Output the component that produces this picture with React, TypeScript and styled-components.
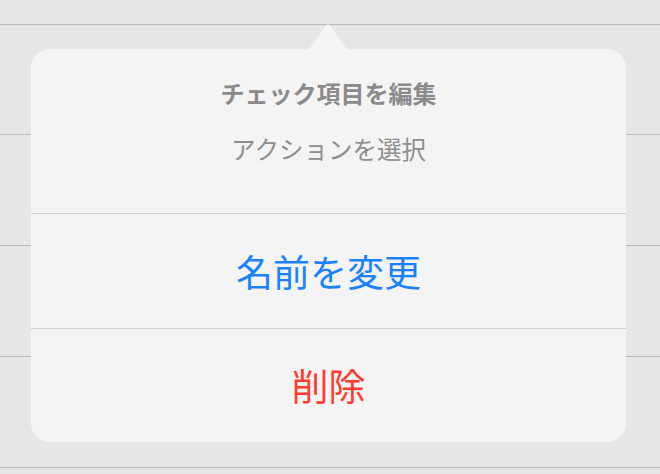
import styled, { createGlobalStyle } from 'styled-components';

const GlobalStyle = createGlobalStyle`
  html, body {
    margin: 0;
    padding: 0;
    background: #e6e6e6;
  }
  body {
    font-family: "Noto Sans CJK JP", "Noto Sans", sans-serif;
    overflow: hidden;
  }
`;

const rows = [24, 109, 110, 110, 110];

export default function App() {
  return (
    <Screen>
      <GlobalStyle />
      <List>
        {rows.map((h, i) => (
          <Row key={i} style={{ height: h }} />
        ))}
      </List>

      <Popover>
        <Arrow width="48" height="26" viewBox="0 0 48 26">
          <path d="M0 26 C5 26 7 24 9 21 L22 2.5 Q24 -0.5 26 2.5 L39 21 C41 24 43 26 48 26 Z" fill="#f4f4f4" />
        </Arrow>
        <Card>
          <Header>
            <Title>チェック項目を編集</Title>
            <Message>アクションを選択</Message>
          </Header>
          <Action>名前を変更</Action>
          <Action destructive>削除</Action>
        </Card>
      </Popover>
    </Screen>
  );
}

const Screen = styled.div`
  position: relative;
  width: 660px;
  height: 474px;
  overflow: hidden;
  background: #e6e6e6;
`;

const List = styled.div`
  display: flex;
  flex-direction: column;
`;

const Row = styled.div`
  flex: none;
  border-bottom: 1px solid #b9b9b9;
`;

const Popover = styled.div`
  position: absolute;
  top: 23px;
  left: 31px;
  width: 595px;
  padding-top: 26px;
`;

const Arrow = styled.svg`
  position: absolute;
  top: 0;
  left: 273px;
  display: block;
`;

const Card = styled.div`
  height: 393px;
  background: #f4f4f4;
  border-radius: 19px;
  display: flex;
  flex-direction: column;
  overflow: hidden;
`;

const Header = styled.div`
  height: 165px;
  box-sizing: border-box;
  display: flex;
  flex-direction: column;
  align-items: center;
  padding-top: 28px;
  gap: 24px;
  border-bottom: 1px solid #cfcfcf;
`;

const Title = styled.div`
  font-size: 24px;
  line-height: 32px;
  font-weight: 700;
  color: #8a8a8a;
`;

const Message = styled.div`
  font-size: 24.5px;
  line-height: 32px;
  color: #8e8e8e;
`;

const Action = styled.div<{ destructive?: boolean }>`
  flex: 1;
  display: flex;
  align-items: center;
  justify-content: center;
  font-size: 37px;
  color: ${props => (props.destructive ? '#ff3b30' : '#1a82fb')};

  & + & {
    border-top: 1px solid #cfcfcf;
  }
`;
